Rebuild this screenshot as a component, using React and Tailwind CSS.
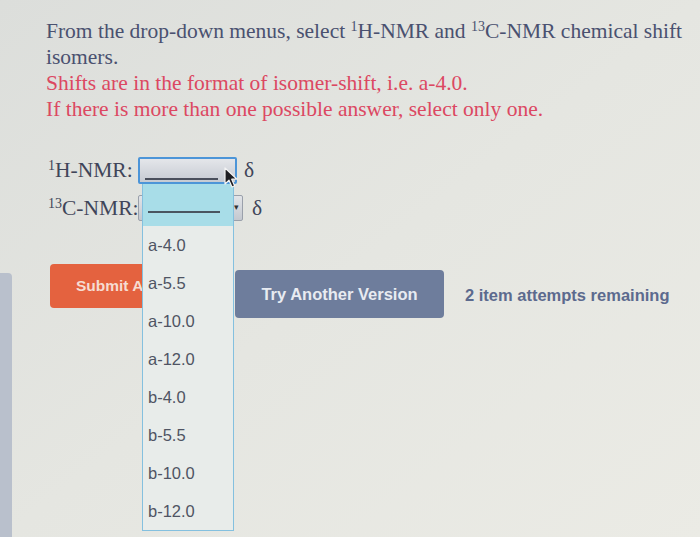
import React from "react";

const options = ["a-4.0", "a-5.5", "a-10.0", "a-12.0", "b-4.0", "b-5.5", "b-10.0", "b-12.0"];

function Cursor() {
  return (
    <svg width="14" height="22" viewBox="0 0 14 22" className="absolute left-[86px] top-[10px] z-20">
      <path d="M1 1 L1 17 L5 13.2 L8 20 L10.6 18.8 L7.7 12.2 L13 12.2 Z" fill="#1e1e22" stroke="#f4f4f4" strokeWidth="1.2" strokeLinejoin="round" />
    </svg>
  );
}

export default function App() {
  return (
    <div className="w-[700px] h-[537px] overflow-hidden flex bg-gradient-to-br from-[#dcdedb] via-[#e5e6e1] to-[#ebebe5] font-['Liberation_Serif',serif]">
      <div className="w-[12px] shrink-0 mt-[273px] rounded-tr-[4px] bg-[#b9c0cc]" />
      <div className="flex-1 min-w-0 pl-[34px] pt-[18px]">
        <div className="text-[21.5px] leading-[26px] text-[#4a5170]">
          <p className="whitespace-nowrap">
            From the drop-down menus, select <sup className="text-[14px]">1</sup>H-NMR and <sup className="text-[14px]">13</sup>C-NMR chemical shift
          </p>
          <p>isomers.</p>
          <p className="text-[#dc4862]">Shifts are in the format of isomer-shift, i.e. a-4.0.</p>
          <p className="text-[#dc4862]">If there is more than one possible answer, select only one.</p>
        </div>

        <div className="mt-[35px] pl-[2px] text-[21.5px] text-[#3f4559]">
          <div className="flex items-center h-[27px]">
            <span className="w-[90px] whitespace-nowrap">
              <sup className="text-[14px]">1</sup>H-NMR:
            </span>
            <div className="relative w-[99px] h-[27px]">
              <div className="w-full h-full rounded-[2px] border-2 border-[#4c95d8] bg-gradient-to-b from-[#e4e6ea] to-[#c6cad2] flex items-end pb-[2px] pl-[5px]">
                <div className="w-[73px] h-[2px] bg-[#4a4f5c]" />
              </div>
              <div className="absolute left-[4px] top-full w-[92px] z-10 border border-[#84c0df] border-t-0 bg-[#e8ecea] font-['Liberation_Sans',sans-serif] text-[16.5px] text-[#4f5463]">
                <div className="h-[42px] bg-[#a8dde8] flex items-end pb-[13px] pl-[5px]">
                  <div className="w-[72px] h-[2px] bg-[#4a5560]" />
                </div>
                {options.map((o) => (
                  <div key={o} className="h-[38px] flex items-center pl-[5px]">
                    {o}
                  </div>
                ))}
              </div>
              <Cursor />
            </div>
            <span className="ml-[7px]">δ</span>
          </div>

          <div className="flex items-center h-[26px] mt-[11px]">
            <span className="w-[90px] whitespace-nowrap">
              <sup className="text-[14px]">13</sup>C-NMR:
            </span>
            <div className="w-[105px] h-[26px] rounded-[2px] border border-[#9aa0ab] bg-gradient-to-b from-[#e2e4e8] to-[#c4c8cf] flex items-center justify-end pr-[3px]">
              <span className="text-[9px] text-[#333]">▾</span>
            </div>
            <span className="ml-[9px]">δ</span>
          </div>
        </div>

        <div className="mt-[43px] pl-[4px] flex items-start font-['Liberation_Sans',sans-serif] font-bold">
          <button className="h-[44px] w-[172px] rounded-[4px] bg-[#e4623f] text-[#f6dcd2] text-[15.5px] text-left pl-[26px]">
            Submit Answer
          </button>
          <button className="ml-[13px] mt-[6px] h-[48px] w-[209px] rounded-[4px] bg-[#6e7d9c] text-[#e8ebf1] text-[16.5px]">
            Try Another Version
          </button>
          <span className="ml-[21px] mt-[19px] text-[16.5px] text-[#5c6a8e] whitespace-nowrap">2 item attempts remaining</span>
        </div>
      </div>
    </div>
  );
}
